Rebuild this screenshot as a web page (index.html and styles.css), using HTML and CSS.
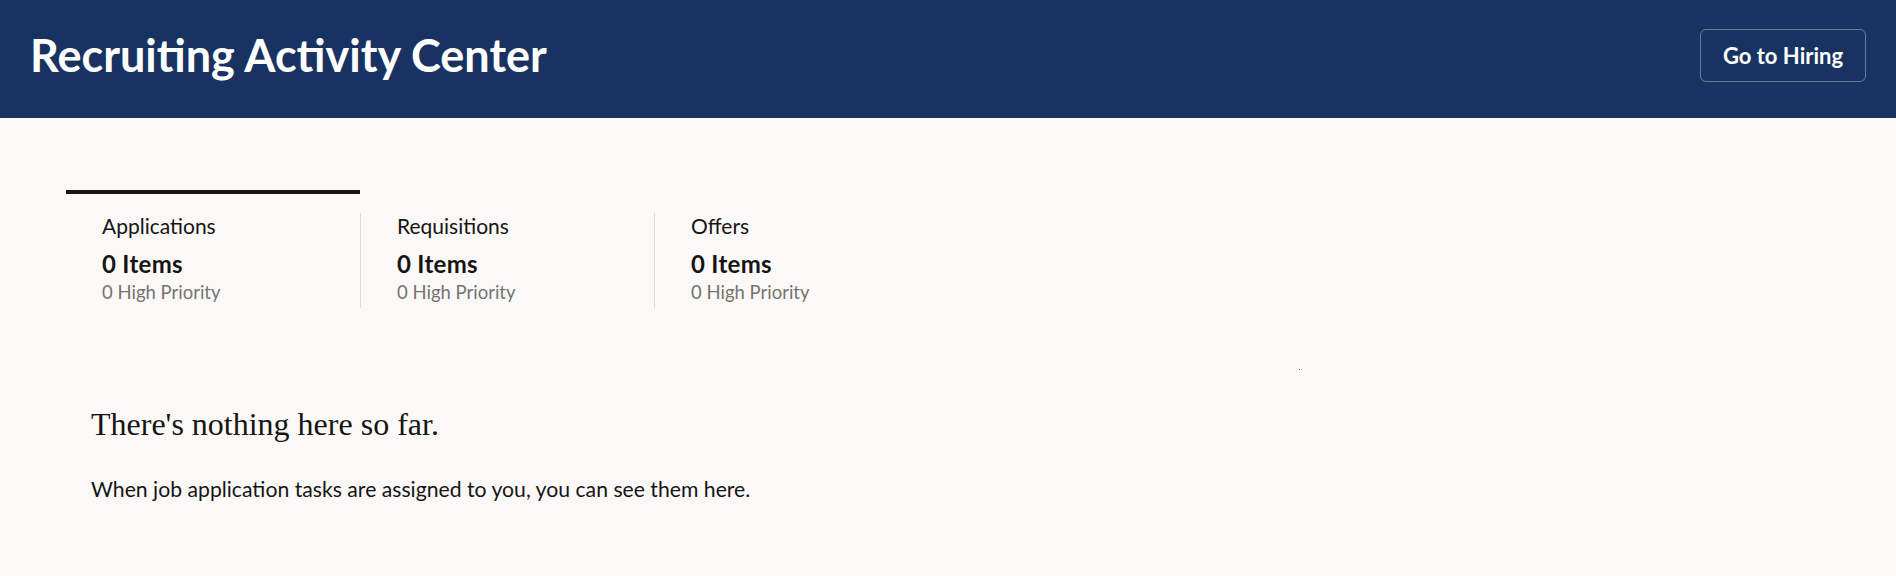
FILE: index.html
```html
<!DOCTYPE html>
<html lang="en">
<head>
<meta charset="utf-8">
<title>Recruiting Activity Center</title>
<link rel="stylesheet" href="styles.css">
</head>
<body>
<header class="topbar">
  <h1 class="title">Recruiting Activity Center</h1>
  <button class="hire-btn" type="button">Go to Hiring</button>
</header>
<main class="content">
  <nav class="tabs">
    <div class="tab is-active">
      <div class="tab-body">
        <div class="tab-label">Applications</div>
        <div class="tab-count">0 Items</div>
        <div class="tab-sub">0 High Priority</div>
      </div>
    </div>
    <div class="tab">
      <div class="tab-body has-divider">
        <div class="tab-label">Requisitions</div>
        <div class="tab-count">0 Items</div>
        <div class="tab-sub">0 High Priority</div>
      </div>
    </div>
    <div class="tab">
      <div class="tab-body has-divider">
        <div class="tab-label">Offers</div>
        <div class="tab-count">0 Items</div>
        <div class="tab-sub">0 High Priority</div>
      </div>
    </div>
  </nav>
  <section class="empty">
    <h2 class="empty-title">There's nothing here so far.</h2>
    <p class="empty-text">When job application tasks are assigned to you, you can see them here.</p>
  </section>
  <span class="dot"></span>
</main>
</body>
</html>
```
FILE: styles.css
```css
html, body {
  margin: 0;
  padding: 0;
}
body {
  background: #faf9f8;
  font-family: Lato, "Noto Sans", sans-serif;
  color: #161513;
  height: 576px;
  overflow: hidden;
}
.topbar {
  height: 118px;
  box-sizing: border-box;
  background: #183361;
  display: flex;
  align-items: center;
  justify-content: space-between;
  padding: 0 30px 8px 30px;
}
.title {
  margin: 0;
  font-family: Lato, sans-serif;
  font-weight: 700;
  font-size: 45px;
  line-height: 52px;
  color: #ffffff;
}
.hire-btn {
  width: 166px;
  height: 53px;
  box-sizing: border-box;
  background: transparent;
  border: 1px solid rgba(255,255,255,0.35);
  border-radius: 6px;
  color: #ffffff;
  font-family: Lato, sans-serif;
  font-weight: 700;
  font-size: 22px;
  padding: 0;
}
.content {
  position: relative;
  padding: 72px 0 0 66px;
}
.tabs {
  display: flex;
}
.tab {
  width: 294px;
  border-top: 4px solid transparent;
}
.tab.is-active {
  border-top-color: #161513;
}
.tab-body {
  margin-top: 19px;
  height: 95px;
  box-sizing: border-box;
  padding: 0 0 0 36px;
}
.tab-body.has-divider {
  border-left: 1px solid #dedcd8;
}
.tab-label {
  font-size: 21px;
  line-height: 26px;
  color: #161513;
}
.tab-count {
  margin-top: 11px;
  font-size: 24px;
  letter-spacing: 0.3px;
  font-weight: 700;
  line-height: 28px;
}
.tab-sub {
  margin-top: 2px;
  font-size: 18.5px;
  line-height: 24px;
  color: #757370;
}
.empty {
  padding: 98px 0 0 25px;
}
.empty-title {
  margin: 0;
  font-family: "Liberation Serif", serif;
  font-weight: 400;
  font-size: 32px;
  line-height: 36px;
}
.empty-text {
  margin: 34px 0 0;
  font-size: 21.2px;
  line-height: 26px;
}
.dot {
  position: absolute;
  left: 1299px;
  top: 251px;
  width: 1px;
  height: 1px;
  background: #555;
}
```
